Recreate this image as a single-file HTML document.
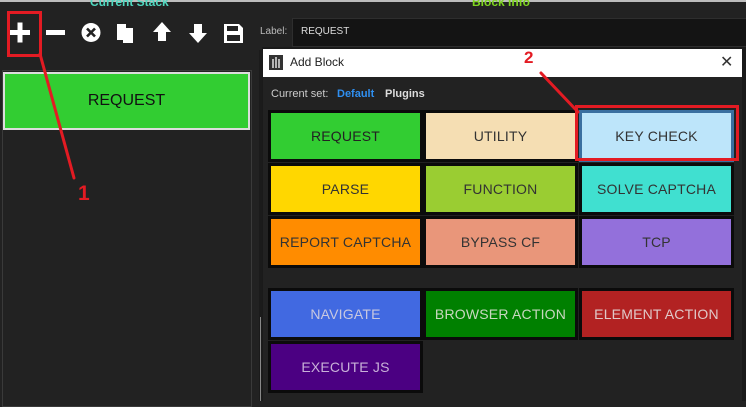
<!DOCTYPE html>
<html><head><style>
body{margin:0;width:746px;height:401px;background:#222;position:relative;overflow:hidden;font-family:"Liberation Sans",sans-serif}
.a{position:absolute}
.c{position:absolute;background:#0b0b0b;width:155px;height:52px}
.c div{position:absolute;left:3px;top:3px;right:3px;bottom:3px;display:flex;align-items:center;justify-content:center;font-size:14px;letter-spacing:0.2px}
.ic{position:absolute;top:22px;color:#fff}
</style></head><body>
<div class="a" style="left:0;top:0;width:746px;height:2px;background:#bdbdbd"></div>
<div class="a" style="left:90px;top:-5px;color:#4fd8c0;font-size:12px;font-weight:bold">Current Stack</div>
<div class="a" style="left:472px;top:-5px;color:#7fd520;font-size:12px;font-weight:bold">Block Info</div>
<!-- toolbar icons -->
<svg class="a" style="left:0;top:14px" width="250" height="36" viewBox="0 0 250 36">
<g fill="#fff">
<rect x="10" y="16" width="20" height="5"/><rect x="17.5" y="8.5" width="5" height="20"/>
<rect x="46" y="16" width="19" height="5"/>
<circle cx="91" cy="18.5" r="9.5"/>
<rect x="117" y="10" width="9" height="16"/><rect x="123" y="14" width="10" height="15"/>
<path d="M162 8 L171 18 L166 18 L166 27 L158 27 L158 18 L153 18 Z"/>
<path d="M198 29 L189 19 L194 19 L194 10 L202 10 L202 19 L207 19 Z"/>
<path d="M224 10 h15 l4 4 v15 h-19 z M227 12 v5 h11 v-5 z M227 21 v6 h13 v-6 z" fill-rule="evenodd"/>
</g>
<path d="M87 14.5 l8 8 M95 14.5 l-8 8" stroke="#222" stroke-width="2.6"/>
</svg>
<div class="a" style="left:7px;top:11px;width:29px;height:40px;border:3px solid #e31b23"></div>
<div class="a" style="left:260px;top:26px;color:#bbb;font-size:10px">Label:</div>
<div class="a" style="left:292px;top:18px;width:454px;height:27px;background:#141414;border:1px solid #2e2e2e"></div>
<div class="a" style="left:301px;top:26px;color:#ddd;font-size:10px">REQUEST</div>
<!-- left panel -->
<div class="a" style="left:2px;top:70px;width:248px;height:335px;border:1px solid #3a3a3a"></div>
<div class="a" style="left:3px;top:72px;width:247px;height:58px;background:#ddd"></div>
<div class="a" style="left:5px;top:74px;width:243px;height:54px;background:#32cd32;display:flex;align-items:center;justify-content:center;font-size:16px;color:#111">REQUEST</div>
<div class="a" style="left:259px;top:50px;width:4px;height:351px;background:#1b1b1b"></div>
<div class="a" style="left:260px;top:317px;width:1px;height:84px;background:#888"></div>
<!-- dialog -->
<div class="a" style="left:262px;top:47px;width:484px;height:354px;background:#1a1a1a"></div>
<div class="a" style="left:263px;top:49px;width:479px;height:352px;background:#222"></div>
<div class="a" style="left:263px;top:49px;width:479px;height:28px;background:#fff"></div>
<div class="a" style="left:269px;top:55px;width:14px;height:15px;background:#333"></div>
<svg class="a" style="left:269px;top:55px" width="14" height="15"><g stroke="#fff" stroke-width="1.3"><path d="M4 4v9M7 2v11M10 4v9"/></g></svg>
<div class="a" style="left:290px;top:55px;font-size:12px;color:#222">Add Block</div>
<div class="a" style="left:720px;top:52px;font-size:16px;color:#333">✕</div>
<div class="a" style="left:271px;top:88px;font-size:11px;color:#ccc">Current set:</div>
<div class="a" style="left:337px;top:88px;font-size:11px;color:#2f8ff0;font-weight:bold">Default</div>
<div class="a" style="left:385px;top:88px;font-size:11px;color:#ddd;font-weight:bold">Plugins</div>

<div class="c" style="left:268px;top:110px"><div style="background:#32cd32;color:#222">REQUEST</div></div>
<div class="c" style="left:423px;top:110px"><div style="background:#f5deb3;color:#333">UTILITY</div></div>
<div class="c" style="left:579px;top:110px;background:#3a6fa0"><div style="background:#bde5fa;color:#333">KEY CHECK</div></div>
<div class="c" style="left:268px;top:163px"><div style="background:#ffd700;color:#333">PARSE</div></div>
<div class="c" style="left:423px;top:163px"><div style="background:#9acd32;color:#333">FUNCTION</div></div>
<div class="c" style="left:579px;top:163px"><div style="background:#40e0d0;color:#333">SOLVE CAPTCHA</div></div>
<div class="c" style="left:268px;top:216px"><div style="background:#ff8c00;color:#333">REPORT CAPTCHA</div></div>
<div class="c" style="left:423px;top:216px"><div style="background:#e9967a;color:#333">BYPASS CF</div></div>
<div class="c" style="left:579px;top:216px"><div style="background:#9370db;color:#333">TCP</div></div>
<div class="c" style="left:268px;top:288px"><div style="background:#4169e1;color:#c8c8e0">NAVIGATE</div></div>
<div class="c" style="left:423px;top:288px"><div style="background:#008000;color:#c8d8c0">BROWSER ACTION</div></div>
<div class="c" style="left:579px;top:288px"><div style="background:#b22222;color:#e0c8c8">ELEMENT ACTION</div></div>
<div class="c" style="left:268px;top:341px"><div style="background:#4b0082;color:#c8b0d8">EXECUTE JS</div></div>

<!-- annotations -->
<div class="a" style="left:575px;top:105px;width:164px;height:56px;border:3px solid #e31b23;box-sizing:border-box"></div>
<svg class="a" style="left:0;top:0" width="746" height="401"><g stroke="#e31b23" stroke-width="3" stroke-linecap="round"><path d="M40 54 L74 178"/><path d="M541 73 L578 112"/></g></svg>
<div class="a" style="left:78px;top:182px;color:#e31b23;font-size:21px;font-weight:bold">1</div>
<div class="a" style="left:524px;top:48px;color:#e31b23;font-size:17px;font-weight:bold">2</div>
</body></html>
